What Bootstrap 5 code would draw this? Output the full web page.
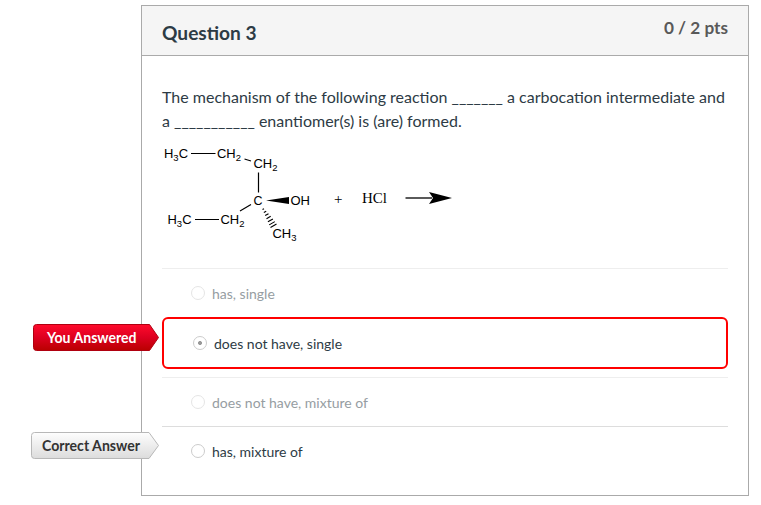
<!DOCTYPE html>
<html lang="en">
<head>
    <meta charset="UTF-8">
    <meta name="viewport" content="width=device-width, initial-scale=1">
    <title>Question 3</title>
    <link href="https://cdn.jsdelivr.net/npm/bootstrap@5.3.3/dist/css/bootstrap.min.css" rel="stylesheet">
    <style>
        body {
            font-family: Lato, "Liberation Sans", sans-serif;
            color: #2d3b45;
            background: #fff;
        }
        .question {
            width: 608px;
            height: 491px;
            margin: 5px 0 0 141px;
            border: 1px solid #aaa;
            border-radius: 0;
        }
        .question-head {
            height: 50px;
            padding: 0 20px;
            background: #f5f5f5;
            border-bottom: 1px solid #aaa;
            border-radius: 0 !important;
        }
        .question-name {
            font-size: 19.15px;
            line-height: 24px;
            margin-top: 15px;
            color: #2d3b45;
        }
        .question-points {
            font-size: 17.2px;
            line-height: 24px;
            margin-top: 10px;
            color: #595959;
        }
        .question-body {
            padding: 29px 20px 0;
            color: #2d3b45;
        }
        .question-text {
            font-size: 16px;
            line-height: 24px;
            white-space: nowrap;
        }
        .reaction {
            display: block;
            margin-top: 7px;
            font-family: "Liberation Sans", Arial, sans-serif;
            font-size: 13px;
        }
        .answers {
            margin-top: 18px;
            font-size: 14px;
        }
        .answer {
            position: relative;
            height: 49px;
            padding-left: 29px;
            border-top: 1px solid #ddd;
        }
        .answer.faded {
            border-color: #eee;
            color: #969da2;
        }
        .answer.picked {
            height: 52px;
            margin-bottom: 8px;
            border: 2px solid #f00;
            border-radius: 6px;
        }
        .answer-radio {
            width: 14px;
            height: 14px;
            flex: none;
            margin-right: 7px;
            border: 1px solid #ccc;
            border-radius: 50%;
            background: #fff;
        }
        .faded .answer-radio {
            border-color: #e5e5e5;
        }
        .picked .answer-radio {
            background: radial-gradient(circle, #999 0 1.6px, #fff 2.3px);
        }
        .answer-flag {
            position: absolute;
            left: -131px;
            top: 5px;
            font-size: 15.5px;
            font-weight: 700;
        }
    </style>
</head>
<body>

<div class="card question">
    <div class="card-header question-head d-flex justify-content-between align-items-start">
        <div class="question-name fw-bold">Question 3</div>
        <div class="question-points fw-bold">0 / 2 pts</div>
    </div>
    <div class="card-body question-body">
        <div class="question-text">The mechanism of the following reaction _______ a carbocation intermediate and<br>a ___________ enantiomer(s) is (are) formed.</div>

        <!-- reaction scheme -->
        <svg class="reaction" width="310" height="110" viewBox="162 140 310 110">
            <g fill="#000">
                <text x="164" y="158" textLength="24" lengthAdjust="spacingAndGlyphs">H<tspan font-size="9.500" dy="3">3</tspan><tspan dy="-3">C</tspan></text>
                <text x="217" y="158" textLength="24" lengthAdjust="spacingAndGlyphs">CH<tspan font-size="9.500" dy="3">2</tspan></text>
                <text x="253.500" y="168" textLength="24" lengthAdjust="spacingAndGlyphs">CH<tspan font-size="9.500" dy="3">2</tspan></text>
                <text x="253.500" y="205" textLength="9" lengthAdjust="spacingAndGlyphs">C</text>
                <text x="290.500" y="205" textLength="19.500" lengthAdjust="spacingAndGlyphs">OH</text>
                <text x="167.500" y="224" textLength="24" lengthAdjust="spacingAndGlyphs">H<tspan font-size="9.500" dy="3">3</tspan><tspan dy="-3">C</tspan></text>
                <text x="220.500" y="224" textLength="24" lengthAdjust="spacingAndGlyphs">CH<tspan font-size="9.500" dy="3">2</tspan></text>
                <text x="272.500" y="238" textLength="24" lengthAdjust="spacingAndGlyphs">CH<tspan font-size="9.500" dy="3">3</tspan></text>
            </g>
            <!-- bonds -->
            <g stroke="#000" stroke-width="1.2" fill="none">
                <path d="M191 153.500H215.500M244.500 159L251 161M258.500 172.500V192.500M251 204.500L240 211M195 219.500H219"/>
                <path stroke-width="1.1" d="M262.500 209.500l1.500-.8M263.800 212.500l2.400-1.300M265.200 215.600l3.300-1.900M266.500 218.700l4.200-2.400M267.900 221.800l5-2.900M269.200 224.900l5.600-3.300M270.500 227.600l6-3.500"/>
            </g>
            <path d="M266 200.500L289 197V204Z"/>
            <g font-family="Liberation Serif, Times New Roman, serif" font-size="15">
                <text x="334" y="204">+</text>
                <text x="362" y="203" textLength="25" lengthAdjust="spacingAndGlyphs">HCl</text>
            </g>
            <path d="M405.500 198H432" stroke="#000" stroke-width="1.3"/>
            <path d="M429 192L452 198L429 204L433 198Z"/>
        </svg>

        <div class="answers">
            <div class="answer faded d-flex align-items-center">
                <span class="answer-radio"></span>
                <span class="answer-label">has, single</span>
            </div>
            <div class="answer picked d-flex align-items-center">
                <svg class="answer-flag" width="130" height="29" viewBox="0 0 130 29">
                    <defs>
                        <linearGradient id="redFlag" x1="0" y1="0" x2="0" y2="1">
                            <stop offset="0" stop-color="#ff0a2c"/>
                            <stop offset=".5" stop-color="#dd0020"/>
                            <stop offset="1" stop-color="#b90000"/>
                        </linearGradient>
                    </defs>
                    <path d="M3.500 .5H116.500L125.500 13.500L116.500 26.500H3.500Q.5 26.500 .5 23.500V3.500Q.5 .5 3.500 .5Z" fill="url(#redFlag)" stroke="#b00010"/>
                    <text x="14" y="19" fill="#fff" textLength="89.500" lengthAdjust="spacingAndGlyphs">You Answered</text>
                </svg>
                <span class="answer-radio"></span>
                <span class="answer-label">does not have, single</span>
            </div>
            <div class="answer faded d-flex align-items-center">
                <span class="answer-radio"></span>
                <span class="answer-label">does not have, mixture of</span>
            </div>
            <div class="answer d-flex align-items-center">
                <svg class="answer-flag" width="130" height="29" viewBox="0 0 130 29">
                    <defs>
                        <linearGradient id="greyFlag" x1="0" y1="0" x2="0" y2="1">
                            <stop offset="0" stop-color="#fefefe"/>
                            <stop offset="1" stop-color="#dcdcdc"/>
                        </linearGradient>
                    </defs>
                    <path d="M3.500 .5H118L127.500 13.500L118 26.500H3.500Q.5 26.500 .5 23.500V3.500Q.5 .5 3.500 .5Z" fill="url(#greyFlag)" stroke="#b8b8b8"/>
                    <text x="11" y="19" fill="#333" textLength="98" lengthAdjust="spacingAndGlyphs">Correct Answer</text>
                </svg>
                <span class="answer-radio"></span>
                <span class="answer-label">has, mixture of</span>
            </div>
        </div>
    </div>
</div>

<script src="https://cdn.jsdelivr.net/npm/bootstrap@5.3.3/dist/js/bootstrap.bundle.min.js"></script>
</body>
</html>
